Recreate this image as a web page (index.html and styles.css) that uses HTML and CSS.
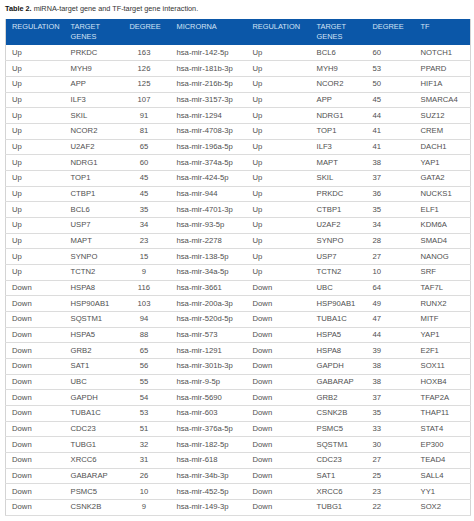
FILE: index.html
```html
<!DOCTYPE html>
<html>
<head>
<meta charset="utf-8">
<link rel="stylesheet" href="styles.css">
</head>
<body>
<div class="page">
  <p class="caption"><b>Table 2.</b> miRNA-target gene and TF-target gene interaction.</p>
  <table class="tbl">
    <colgroup>
      <col class="c1"><col class="c2"><col class="c3"><col class="c4"><col class="c5"><col class="c6"><col class="c7"><col class="c8">
    </colgroup>
    <thead>
      <tr>
        <th>REGULATION</th><th>TARGET<br>GENES</th><th>DEGREE</th><th>MICRORNA</th>
        <th>REGULATION</th><th>TARGET<br>GENES</th><th>DEGREE</th><th>TF</th>
      </tr>
    </thead>
    <tbody>
      <tr><td>Up</td><td>PRKDC</td><td class="num">163</td><td>hsa-mir-142-5p</td><td>Up</td><td>BCL6</td><td>60</td><td>NOTCH1</td></tr>
      <tr><td>Up</td><td>MYH9</td><td class="num">126</td><td>hsa-mir-181b-3p</td><td>Up</td><td>MYH9</td><td>53</td><td>PPARD</td></tr>
      <tr><td>Up</td><td>APP</td><td class="num">125</td><td>hsa-mir-216b-5p</td><td>Up</td><td>NCOR2</td><td>50</td><td>HIF1A</td></tr>
      <tr><td>Up</td><td>ILF3</td><td class="num">107</td><td>hsa-mir-3157-3p</td><td>Up</td><td>APP</td><td>45</td><td>SMARCA4</td></tr>
      <tr><td>Up</td><td>SKIL</td><td class="num">91</td><td>hsa-mir-1294</td><td>Up</td><td>NDRG1</td><td>44</td><td>SUZ12</td></tr>
      <tr><td>Up</td><td>NCOR2</td><td class="num">81</td><td>hsa-mir-4708-3p</td><td>Up</td><td>TOP1</td><td>41</td><td>CREM</td></tr>
      <tr><td>Up</td><td>U2AF2</td><td class="num">65</td><td>hsa-mir-196a-5p</td><td>Up</td><td>ILF3</td><td>41</td><td>DACH1</td></tr>
      <tr><td>Up</td><td>NDRG1</td><td class="num">60</td><td>hsa-mir-374a-5p</td><td>Up</td><td>MAPT</td><td>38</td><td>YAP1</td></tr>
      <tr><td>Up</td><td>TOP1</td><td class="num">45</td><td>hsa-mir-424-5p</td><td>Up</td><td>SKIL</td><td>37</td><td>GATA2</td></tr>
      <tr><td>Up</td><td>CTBP1</td><td class="num">45</td><td>hsa-mir-944</td><td>Up</td><td>PRKDC</td><td>36</td><td>NUCKS1</td></tr>
      <tr><td>Up</td><td>BCL6</td><td class="num">35</td><td>hsa-mir-4701-3p</td><td>Up</td><td>CTBP1</td><td>35</td><td>ELF1</td></tr>
      <tr><td>Up</td><td>USP7</td><td class="num">34</td><td>hsa-mir-93-5p</td><td>Up</td><td>U2AF2</td><td>34</td><td>KDM6A</td></tr>
      <tr><td>Up</td><td>MAPT</td><td class="num">23</td><td>hsa-mir-2278</td><td>Up</td><td>SYNPO</td><td>28</td><td>SMAD4</td></tr>
      <tr><td>Up</td><td>SYNPO</td><td class="num">15</td><td>hsa-mir-138-5p</td><td>Up</td><td>USP7</td><td>27</td><td>NANOG</td></tr>
      <tr><td>Up</td><td>TCTN2</td><td class="num">9</td><td>hsa-mir-34a-5p</td><td>Up</td><td>TCTN2</td><td>10</td><td>SRF</td></tr>
      <tr><td>Down</td><td>HSPA8</td><td class="num">116</td><td>hsa-mir-3661</td><td>Down</td><td>UBC</td><td>64</td><td>TAF7L</td></tr>
      <tr><td>Down</td><td>HSP90AB1</td><td class="num">103</td><td>hsa-mir-200a-3p</td><td>Down</td><td>HSP90AB1</td><td>49</td><td>RUNX2</td></tr>
      <tr><td>Down</td><td>SQSTM1</td><td class="num">94</td><td>hsa-mir-520d-5p</td><td>Down</td><td>TUBA1C</td><td>47</td><td>MITF</td></tr>
      <tr><td>Down</td><td>HSPA5</td><td class="num">88</td><td>hsa-mir-573</td><td>Down</td><td>HSPA5</td><td>44</td><td>YAP1</td></tr>
      <tr><td>Down</td><td>GRB2</td><td class="num">65</td><td>hsa-mir-1291</td><td>Down</td><td>HSPA8</td><td>39</td><td>E2F1</td></tr>
      <tr><td>Down</td><td>SAT1</td><td class="num">56</td><td>hsa-mir-301b-3p</td><td>Down</td><td>GAPDH</td><td>38</td><td>SOX11</td></tr>
      <tr><td>Down</td><td>UBC</td><td class="num">55</td><td>hsa-mir-9-5p</td><td>Down</td><td>GABARAP</td><td>38</td><td>HOXB4</td></tr>
      <tr><td>Down</td><td>GAPDH</td><td class="num">54</td><td>hsa-mir-5690</td><td>Down</td><td>GRB2</td><td>37</td><td>TFAP2A</td></tr>
      <tr><td>Down</td><td>TUBA1C</td><td class="num">53</td><td>hsa-mir-603</td><td>Down</td><td>CSNK2B</td><td>35</td><td>THAP11</td></tr>
      <tr><td>Down</td><td>CDC23</td><td class="num">51</td><td>hsa-mir-376a-5p</td><td>Down</td><td>PSMC5</td><td>33</td><td>STAT4</td></tr>
      <tr><td>Down</td><td>TUBG1</td><td class="num">32</td><td>hsa-mir-182-5p</td><td>Down</td><td>SQSTM1</td><td>30</td><td>EP300</td></tr>
      <tr><td>Down</td><td>XRCC6</td><td class="num">31</td><td>hsa-mir-618</td><td>Down</td><td>CDC23</td><td>27</td><td>TEAD4</td></tr>
      <tr><td>Down</td><td>GABARAP</td><td class="num">26</td><td>hsa-mir-34b-3p</td><td>Down</td><td>SAT1</td><td>25</td><td>SALL4</td></tr>
      <tr><td>Down</td><td>PSMC5</td><td class="num">10</td><td>hsa-mir-452-5p</td><td>Down</td><td>XRCC6</td><td>23</td><td>YY1</td></tr>
      <tr><td>Down</td><td>CSNK2B</td><td class="num">9</td><td>hsa-mir-149-3p</td><td>Down</td><td>TUBG1</td><td>22</td><td>SOX2</td></tr>
    </tbody>
  </table>
</div>
</body>
</html>
```
FILE: styles.css
```css
html, body {
  margin: 0;
  padding: 0;
  background: #ffffff;
}
.page {
  padding: 3px 4px 0 5px;
  font-family: "Liberation Sans", Arial, sans-serif;
  color: #4d4d4d;
}
.caption {
  margin: 0 0 5px 0;
  font-size: 7.3px;
  line-height: 11px;
  color: #333;
}
.caption b {
  color: #111;
}
.tbl {
  width: 465px;
  border-collapse: collapse;
  table-layout: fixed;
  font-size: 7.7px;
  border-left: 1px solid #d4d4d4;
  border-right: 1px solid #d4d4d4;
}
.c1 { width: 59px; }
.c2 { width: 59px; }
.c3 { width: 47px; }
.c4 { width: 76px; }
.c5 { width: 64px; }
.c6 { width: 56px; }
.c7 { width: 48px; }
.c8 { width: 56px; }
.tbl th {
  background: #0b57a8;
  color: #d3e3f5;
  font-weight: normal;
  text-align: left;
  vertical-align: top;
  box-sizing: border-box;
  height: 26px;
  padding: 3px 0 0 6px;
  line-height: 10px;
  font-size: 7.4px;
}
.tbl td {
  height: 15.68px;
  box-sizing: border-box;
  padding: 0 0 0 6px;
  border-bottom: 1px solid #dcdcdc;
  line-height: 14px;
  white-space: nowrap;
  color: #505050;
}
.tbl td.num {
  text-align: center;
  padding: 0 6px 0 0;
}
```
